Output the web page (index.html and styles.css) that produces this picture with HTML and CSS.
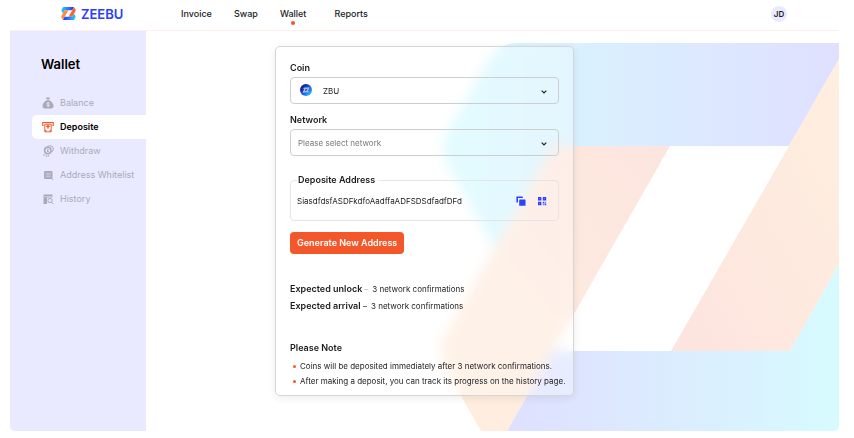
FILE: index.html
```html
<!DOCTYPE html>
<html lang="en">
<head>
    <meta charset="UTF-8">
    <meta name="viewport" content="width=device-width, initial-scale=1.0">
    <title>Zeebu - Wallet</title>
    <link rel="stylesheet" href="styles.css">
</head>
<body>
    <div class="app">
        <header class="header">
            <a href="#" class="logo">
                <svg width="15" height="13" viewBox="0 0 464 412" aria-hidden="true">
                    <defs>
                        <linearGradient id="logoTop" x1="0" x2="1">
                            <stop offset="0" stop-color="#25d4ff"/>
                            <stop offset=".9" stop-color="#2b3bff"/>
                        </linearGradient>
                        <linearGradient id="logoBottom" x1="0" x2="1">
                            <stop offset=".1" stop-color="#2b3bff"/>
                            <stop offset="1" stop-color="#25d4ff"/>
                        </linearGradient>
                    </defs>
                    <path d="M79 0H409L350 103H114L56 206L9 122Q0 105 9 88L50 17Q60 0 79 0Z" fill="url(#logoTop)"/>
                    <path d="M114 103H231L68 388H42L6 325Q-3 308 6 292Z" fill="#ff8a3c"/>
                    <path d="M350 309H233L396 24H422L458 87Q467 104 458 120Z" fill="#ff6428"/>
                    <path d="M385 412H55L114 309H350L408 206L455 290Q464 307 455 324L414 395Q404 412 385 412Z" fill="url(#logoBottom)"/>
                </svg>
                <span>ZEEBU</span>
            </a>
            <nav class="nav">
                <ul>
                    <li><a href="#">Invoice</a></li>
                    <li><a href="#">Swap</a></li>
                    <li><a href="#" class="active">Wallet</a></li>
                    <li><a href="#">Reports</a></li>
                </ul>
            </nav>
            <button type="button" class="avatar">JD</button>
        </header>

        <div class="layout">
            <aside class="sidebar">
                <h1>Wallet</h1>
                <ul class="menu">
                    <li><a href="#">
                        <svg viewBox="0 0 12 12" aria-hidden="true">
                            <path d="M4 .5h4L7.300 2.600H4.700zM4.500 3.200h3C9.800 4.500 11.500 7 11.500 9c0 1.800-1 2.500-2.500 2.500H3C1.500 11.500.5 10.800.5 9c0-2 1.700-4.500 4-5.800z" fill="#a9aab8"/>
                            <path d="M7.600 6.200C6.800 5.200 4.700 5.500 4.800 6.600c.1 1.200 2.600.6 2.700 1.800 0 1.100-2.200 1.200-3 .2M6.100 5v5" fill="none" stroke="#e9eaff" stroke-width=".8"/>
                        </svg>
                        Balance</a></li>
                    <li><a href="#" class="active">
                        <svg viewBox="0 0 12 12" aria-hidden="true">
                            <path d="M1.500 4.500H.8v-3h10.400v3h-.7" fill="none" stroke="#f4572a" stroke-width="1.200"/>
                            <path d="M2.800 3.200h6.400v7.600H2.800z" fill="#fff" stroke="#f4572a"/>
                            <path d="M6 3.500 8.300 6 6.700 6v1.500H5.300V6H3.700zM3 9h1.300v1.600H3zM7.700 9H9v1.600H7.700z" fill="#f4572a"/>
                        </svg>
                        Deposite</a></li>
                    <li><a href="#">
                        <svg viewBox="0 0 12 12" aria-hidden="true">
                            <circle cx="8" cy="4" r="3.300" fill="none" stroke="#a9aab8"/>
                            <circle cx="5.800" cy="5.500" r="3.200" fill="#e9eaff" stroke="#a9aab8" stroke-width="1.600"/>
                            <path d="M5.800 3.800v3.400M5 4.700h1.500M5 6.500h1.600M2 9v2M4.300 10v1.800M6.800 10l-.8 1.800" fill="none" stroke="#a9aab8"/>
                        </svg>
                        Withdraw</a></li>
                    <li><a href="#">
                        <svg viewBox="0 0 12 12" aria-hidden="true">
                            <rect x="2" y="2" width="8.500" height="8" rx="1" fill="#a9aab8"/>
                            <path d="M3.500 4.300h5.500M3.500 6h5.500M3.500 7.700h5.500" stroke="#e9eaff" stroke-width=".5"/>
                            <path d="m10 10.200.6.600 1.300-1.300" fill="none" stroke="#a9aab8" stroke-width=".8"/>
                        </svg>
                        Address Whitelist</a></li>
                    <li><a href="#">
                        <svg viewBox="0 0 12 12" aria-hidden="true">
                            <path d="M1.500 1.500h9v3H5v6.500H1.500z" fill="#a9aab8"/>
                            <path d="M1.800 3.700h8.500" stroke="#e9eaff" stroke-width=".6"/>
                            <circle cx="8" cy="7.500" r="2.100" fill="none" stroke="#a9aab8"/>
                            <path d="m9.500 9.100 2 2.200" stroke="#a9aab8"/>
                        </svg>
                        History</a></li>
                </ul>
            </aside>

            <main class="main">
                <!-- oversized logo shape behind the card -->
                <svg class="backdrop" viewBox="0 0 400 388" aria-hidden="true">
                    <defs>
                        <linearGradient id="bgTop" x1="0" x2="1">
                            <stop offset="0" stop-color="#d6fbff"/>
                            <stop offset=".35" stop-color="#d9f0fe"/>
                            <stop offset="1" stop-color="#dfe0ff"/>
                        </linearGradient>
                        <linearGradient id="bgBottom" x1="0" x2="1">
                            <stop offset="0" stop-color="#dfe0ff"/>
                            <stop offset=".65" stop-color="#daf0fe"/>
                            <stop offset="1" stop-color="#d6fbff"/>
                        </linearGradient>
                        <linearGradient id="bgWarm" x1="0" y1="1" x2="1" y2="0">
                            <stop offset="0" stop-color="#ffefdf"/>
                            <stop offset="1" stop-color="#fce5df"/>
                        </linearGradient>
                        <linearGradient id="bgWarmRight" x1="0" y1="1" x2="1" y2="0">
                            <stop offset=".1" stop-color="#fde5df"/>
                            <stop offset="1" stop-color="#ffefdf"/>
                        </linearGradient>
                    </defs>
                    <path d="M79 0H400V16L350 103H114L56 206L9 122Q0 105 9 88L50 17Q60 0 79 0Z" fill="url(#bgTop)"/>
                    <path d="M114 103H231L68 388H42L6 325Q-3 308 6 292Z" fill="url(#bgWarm)"/>
                    <path d="M400 16V221L351 308H232L350 103Z" fill="url(#bgWarmRight)"/>
                    <path d="M114 308H351L400 221V388H68Z" fill="url(#bgBottom)"/>
                </svg>

                <form class="card">
                    <label for="coin">Coin</label>
                    <div class="select select-coin">
                        <svg class="coin" viewBox="0 0 12 12" aria-hidden="true">
                            <defs>
                                <linearGradient id="coinFill" x1="0" y1="0" x2="1" y2="1">
                                    <stop offset=".15" stop-color="#14148c"/>
                                    <stop offset=".5" stop-color="#1a50e8"/>
                                    <stop offset=".9" stop-color="#20ccff"/>
                                </linearGradient>
                            </defs>
                            <circle cx="6" cy="6" r="6" fill="url(#coinFill)"/>
                            <path d="M4 3.500h5.200L8 5H3zM3.900 7H9L8 8.500H2.800z" fill="#6fc6ff"/>
                            <path d="M4.500 4.800h1.300L4 8.500H2.600zM8.300 3.500h1.300L7.500 7.300H6.200z" fill="#ffb08c"/>
                        </svg>
                        <select id="coin">
                            <option>ZBU</option>
                        </select>
                        <svg class="chevron" viewBox="0 0 6 4" aria-hidden="true"><path d="m.7.700 2.300 2.300L5.300.7" fill="none" stroke="#222" stroke-width="1.200"/></svg>
                    </div>

                    <label for="network">Network</label>
                    <div class="select select-empty">
                        <select id="network">
                            <option>Please select network</option>
                        </select>
                        <svg class="chevron" viewBox="0 0 6 4" aria-hidden="true"><path d="m.7.700 2.300 2.300L5.300.7" fill="none" stroke="#222" stroke-width="1.200"/></svg>
                    </div>

                    <fieldset class="address">
                        <legend>Deposite Address</legend>
                        <div class="address-row">
                            <span>SiasdfdsfASDFkdfoAadffaADFSDSdfadfDFd</span>
                            <button type="button" aria-label="Copy address">
                                <svg viewBox="0 0 10 10" aria-hidden="true">
                                    <path d="M1.200 6.500V1.200h5.600" fill="none" stroke="#2b43ff" stroke-width="1.600"/>
                                    <rect x="3.200" y="3.500" width="6.300" height="6.300" rx=".6" fill="#2b43ff"/>
                                </svg>
                            </button>
                            <button type="button" aria-label="Show QR code">
                                <svg viewBox="0 0 10 10" aria-hidden="true">
                                    <path d="M1.700 1.700h2v2h-2zM6.500 1.700h2v2h-2zM1.700 6.500h2v2h-2z" fill="none" stroke="#2b43ff" stroke-width="1.400"/>
                                    <path d="M5.800 5.800h1.600v1.600H5.800zM7.600 7.600h1.600v1.600H7.600zM8.200 5.800h1v1h-1zM5.800 8.200h1v1h-1z" fill="#2b43ff"/>
                                </svg>
                            </button>
                        </div>
                    </fieldset>

                    <button type="button" class="btn">Generate New Address</button>

                    <dl class="expected">
                        <div><dt>Expected unlock</dt><dd><i class="light">–</i>3 network confirmations</dd></div>
                        <div><dt>Expected arrival</dt><dd><i>–</i>3 network confirmations</dd></div>
                    </dl>

                    <h2>Please Note</h2>
                    <ul class="notes">
                        <li>Coins will be deposited immediately after 3 network confirmations.</li>
                        <li>After making a deposit, you can track its progress on the history page.</li>
                    </ul>
                </form>
            </main>
        </div>
    </div>
</body>
</html>
```
FILE: styles.css
```css
/* Reset */
* {
    margin: 0;
    padding: 0;
    box-sizing: border-box;
}

body {
    font-family: Inter, sans-serif;
    font-size: 8px;
    line-height: 12px;
    background: #fff;
    color: #1c1c1e;
}

a {
    color: inherit;
    text-decoration: none;
}

ul {
    list-style: none;
}

button,
select {
    font: inherit;
    color: inherit;
    border: 0;
    background: none;
    cursor: pointer;
}

.app {
    display: flex;
    flex-direction: column;
    min-height: 100vh;
    padding: 0 15px 7px 10px;
}

/* Header */
.header {
    display: flex;
    align-items: center;
    height: 31px;
    padding: 0 52px 3px 51px;
    border-bottom: 1px solid #fdf0ec;
}

.logo {
    display: flex;
    align-items: center;
    gap: 5px;
    width: 120px;
    font-size: 13px;
    font-weight: 600;
    color: #2b3bff;
}

.nav {
    flex: 1;
}

.nav ul {
    display: flex;
    gap: 22px;
    font-size: 9px;
    font-weight: 500;
}

.nav li:last-child {
    margin-left: 6px;
}

.nav a {
    position: relative;
}

.nav .active::after {
    content: "";
    position: absolute;
    left: 50%;
    bottom: -6px;
    width: 4px;
    height: 4px;
    margin-left: -2px;
    border-radius: 50%;
    background: #f4572a;
}

.avatar {
    width: 16px;
    height: 16px;
    border-radius: 50%;
    background: #e9eaff;
    font-weight: 600;
}

/* Sidebar */
.layout {
    display: flex;
    flex: 1;
}

.sidebar {
    width: 136px;
    background: #e9eaff;
    border-bottom-left-radius: 5px;
}

.sidebar h1 {
    margin: 24px 0 18px 31px;
    font-size: 13px;
    line-height: 18px;
    font-weight: 600;
    color: #000;
}

.menu a {
    display: flex;
    align-items: center;
    gap: 6px;
    height: 24px;
    margin-left: 22px;
    padding-left: 10px;
    font-size: 9px;
    color: #a9aab8;
}

.menu svg {
    width: 12px;
    height: 12px;
}

.menu .active {
    background: #fff;
    border-radius: 5px 0 0 5px;
    font-weight: 600;
    color: #000;
}

/* Main */
.main {
    position: relative;
    flex: 1;
    overflow: hidden;
    border-bottom-right-radius: 5px;
}

.backdrop {
    position: absolute;
    right: 0;
    bottom: 0;
    width: 400px;
    height: 388px;
}

.card {
    position: relative;
    width: 299px;
    margin: 15px 0 20px 129px;
    padding: 15px 14px 5px;
    border: 1px solid #d5d6d8;
    border-radius: 5px;
    background: rgba(255, 255, 255, 0.3);
    backdrop-filter: blur(6px);
    box-shadow: 0 2px 8px rgba(0, 0, 0, 0.08);
}

.card label,
.card legend,
.card h2,
.card dt {
    font-size: 9px;
    line-height: 12px;
    font-weight: 600;
}

.card label {
    display: block;
    margin-bottom: 3px;
}

.select {
    position: relative;
    margin-bottom: 10px;
}

.select select {
    display: block;
    width: 100%;
    height: 27px;
    padding: 0 24px 0 7px;
    border: 1px solid #cdced0;
    border-radius: 4px;
    appearance: none;
}

.select-coin select {
    padding-left: 32px;
}

.select-empty select {
    color: #77787c;
}

.coin {
    position: absolute;
    left: 10px;
    top: 7px;
    width: 12px;
    height: 12px;
}

.chevron {
    position: absolute;
    right: 12px;
    top: 13px;
    width: 6px;
    height: 4px;
}

.address {
    margin-top: 18px;
    padding: 0 11px 13px 6px;
    border: 1px solid #e4e5e6;
    border-radius: 4px;
}

.address legend {
    padding: 0 4px 0 1px;
}

.address-row {
    display: flex;
    align-items: center;
    gap: 11px;
    padding-top: 9px;
}

.address-row span {
    flex: 1;
}

.address-row button,
.address-row svg {
    display: block;
    width: 10px;
    height: 10px;
}

.btn {
    display: block;
    margin-top: 11px;
    padding: 5px 7px;
    border-radius: 4px;
    background: #f4572a;
    color: #fff;
    font-size: 9px;
    font-weight: 600;
}

.expected {
    margin: 29px 0 30px;
}

.expected div {
    display: flex;
    margin-bottom: 5px;
}

.expected dt {
    min-width: 71px;
}

.expected i {
    margin: 0 4px 0 2px;
    font-style: normal;
}

.expected .light {
    color: #b5b5b8;
}

.notes {
    margin-top: 6px;
}

.notes li {
    position: relative;
    margin-bottom: 3px;
    padding-left: 10px;
    white-space: nowrap;
}

.notes li::before {
    content: "";
    position: absolute;
    left: 3px;
    top: 5px;
    width: 3px;
    height: 3px;
    border-radius: 50%;
    background: #f4572a;
}
```
